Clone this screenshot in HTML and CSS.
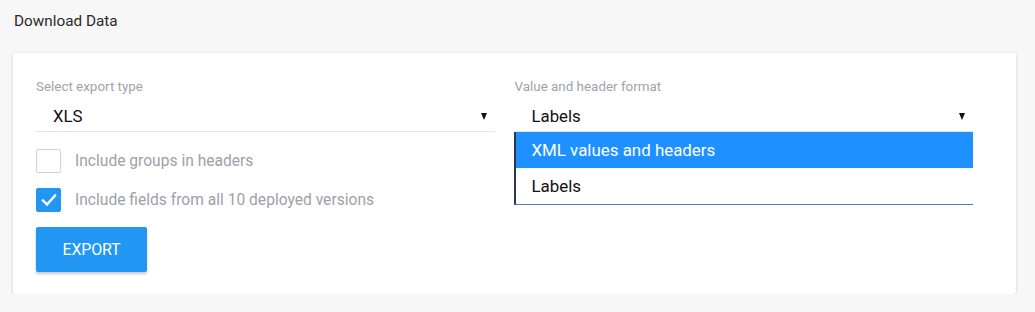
FILE: index.html
```html
<!DOCTYPE html>
<html>
<head>
<meta charset="utf-8">
<link rel="stylesheet" href="styles.css">
</head>
<body>
<div class="page">
  <h1 class="title">Download Data</h1>
  <div class="card">
    <div class="columns">
      <div class="col">
        <div class="field-label">Select export type</div>
        <div class="select">
          <span class="select-value">XLS</span>
          <span class="arrow"></span>
        </div>
        <label class="check-row">
          <span class="box"></span>
          <span class="check-text">Include groups in headers</span>
        </label>
        <label class="check-row">
          <span class="box checked">
            <svg width="18" height="18" viewBox="0 0 18 18"><path d="M3 9.5 L7 13.5 L15 4.5" fill="none" stroke="#fff" stroke-width="2.4" stroke-linecap="square"/></svg>
          </span>
          <span class="check-text">Include fields from all 10 deployed versions</span>
        </label>
        <button class="btn">EXPORT</button>
      </div>
      <div class="col">
        <div class="field-label">Value and header format</div>
        <div class="select open">
          <span class="select-value">Labels</span>
          <span class="arrow"></span>
          <ul class="menu">
            <li class="menu-item active">XML values and headers</li>
            <li class="menu-item">Labels</li>
          </ul>
        </div>
      </div>
    </div>
  </div>
</div>
</body>
</html>
```
FILE: styles.css
```css
* { box-sizing: border-box; }
html, body {
  margin: 0;
  padding: 0;
  background: #f7f7f7;
  font-family: Roboto, "Liberation Sans", Arial, sans-serif;
}
.page {
  padding: 12px 19px 0 13px;
}
.title {
  margin: 0 0 0 1px;
  font-size: 15.3px;
  line-height: 18px;
  font-weight: 400;
  color: #2a2a2a;
}
.card {
  margin-top: 23px;
  background: #fff;
  border-radius: 2px;
  box-shadow: 0 1px 3px rgba(0,0,0,0.18), 0 0 1px rgba(0,0,0,0.06);
  padding: 27px 23px 22px 23px;
}
.columns {
  display: flex;
}
.col {
  flex: 1 1 0;
  padding-right: 20px;
  display: flex;
  flex-direction: column;
  align-items: stretch;
}
.field-label {
  font-size: 13.4px;
  line-height: 14px;
  color: #a2a2aa;
}
.select {
  position: relative;
  margin-top: 6px;
  height: 32px;
  border-bottom: 1px solid #e4e4ea;
  display: flex;
  align-items: center;
  justify-content: space-between;
  padding: 0 8px 0 17px;
}
.select-value {
  font-size: 16.8px;
  color: #111;
}
.arrow {
  width: 0;
  height: 0;
  border-left: 3.5px solid transparent;
  border-right: 3.5px solid transparent;
  border-top: 7px solid #111;
  margin-top: 1px;
}
.menu {
  position: absolute;
  left: -1px;
  right: 0;
  top: 32px;
  margin: 0;
  padding: 0;
  list-style: none;
  background: #fff;
  border-left: 2px solid #2d3650;
  border-bottom: 1px solid #5576b8;
  z-index: 2;
}
.menu-item {
  height: 36px;
  line-height: 36px;
  padding-left: 16px;
  font-size: 16.9px;
  color: #111;
}
.menu-item.active {
  background: #1e90ff;
  color: #fff;
}
.check-row {
  display: flex;
  align-items: center;
  margin-top: 17px;
  height: 24px;
}
.check-row + .check-row {
  margin-top: 15px;
}
.box {
  width: 25px;
  height: 24px;
  border: 1px solid #d2d2d8;
  border-radius: 2px;
  flex: none;
  display: flex;
  align-items: center;
  justify-content: center;
}
.box.checked {
  background: #2196f3;
  border-color: #2196f3;
}
.check-text {
  margin-left: 14px;
  font-size: 15.6px;
  color: #a0a0aa;
}
.btn {
  margin-top: 15px;
  align-self: flex-start;
  width: 111px;
  height: 45px;
  border: none;
  border-radius: 2px;
  background: #2196f3;
  color: #fff;
  font-family: Roboto, "Liberation Sans", Arial, sans-serif;
  font-size: 16px;
  letter-spacing: -0.2px;
  box-shadow: 0 2px 3px rgba(0,0,0,0.22);
  padding: 0;
}
```
